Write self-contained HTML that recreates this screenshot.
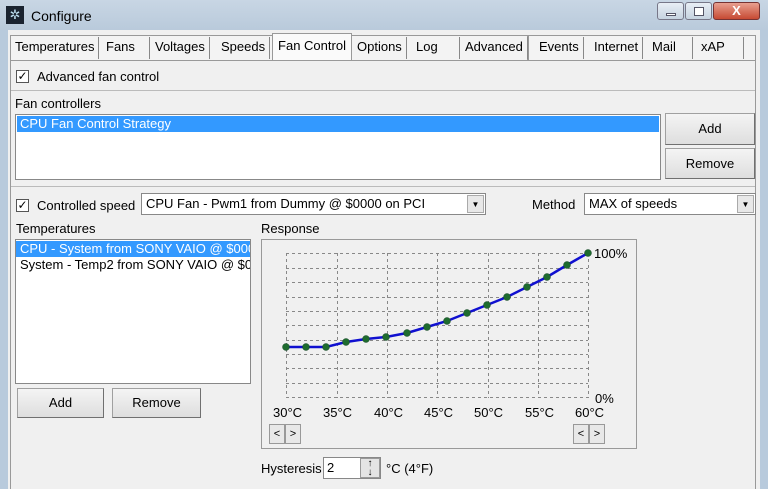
<!DOCTYPE html>
<html><head><style>
*{box-sizing:border-box;margin:0;padding:0}
body{width:768px;height:489px;overflow:hidden;background:#f0f0f0;font-family:"Liberation Sans",sans-serif;font-size:12.5px;color:#000;position:relative}
.a{position:absolute}
.btn{position:absolute;background:linear-gradient(#f4f4f4,#dedede);border:1px solid #a0a0a0;border-right-color:#707070;border-bottom-color:#707070;text-align:center;font-size:13px}
.cb{position:absolute;width:13px;height:13px;border:1px solid #555;background:#fff;font-size:12px;line-height:11px;text-align:center}
.tab{position:absolute;top:37px;height:22px;line-height:20px;font-size:13px;border-right:1px solid #888;padding:0 4px}
.combo{position:absolute;background:#fff;border:1px solid #888;height:22px;line-height:20px;padding-left:4px;font-size:13px}
.dd{position:absolute;right:1px;top:1px;width:17px;height:18px;background:#e8e8e8;border:1px solid #aaa;font-size:8px;text-align:center;line-height:17px}
.sb{position:absolute;width:16px;height:20px;background:#e8e8e8;border:1px solid #999;font-size:11px;text-align:center;line-height:18px}
</style></head><body>
<div class="a" style="left:0;top:0;width:768px;height:30px;background:linear-gradient(#c8d6e4,#b9cadb)"></div>
<div class="a" style="left:0;top:30px;width:8px;height:459px;background:#b8cadc"></div>
<div class="a" style="left:760px;top:30px;width:8px;height:459px;background:#b8cadc"></div>
<div class="a" style="left:6px;top:6px;width:18px;height:18px;background:#1a2330;color:#bde;font-size:13px;line-height:18px;text-align:center">✲</div>
<div class="a" style="left:31px;top:8px;font-size:14px">Configure</div>
<div class="a" style="left:657px;top:2px;width:27px;height:18px;border:1px solid #778;border-radius:3px;background:linear-gradient(#e8eef5,#c6d3e0)"><div class="a" style="left:8px;top:10px;width:10px;height:3px;background:#fff;border:1px solid #556"></div></div>
<div class="a" style="left:685px;top:2px;width:27px;height:18px;border:1px solid #778;border-radius:3px;background:linear-gradient(#e8eef5,#c6d3e0)"><div class="a" style="left:8px;top:4px;width:10px;height:9px;border:1px solid #556;background:#fff"></div></div>
<div class="a" style="left:713px;top:2px;width:47px;height:18px;border:1px solid #733;border-radius:3px;background:linear-gradient(#e8a090,#c74a33);color:#fff;font-weight:bold;text-align:center;line-height:16px;font-size:13px">X</div>
<div class="a" style="left:8px;top:30px;width:752px;height:459px;background:#f0f0f0"></div>
<div class="a" style="left:10px;top:35px;width:518px;height:26px;border:1px solid #999;border-bottom:none;background:#f3f3f3"></div>
<div class="a" style="left:528px;top:35px;width:228px;height:26px;border:1px solid #999;border-bottom:none;background:#f3f3f3"></div>
<div class="tab" style="left:11px">Temperatures</div>
<div class="tab" style="left:102px;width:48px">Fans</div>
<div class="tab" style="left:151px">Voltages</div>
<div class="tab" style="left:217px">Speeds</div>
<div class="a" style="left:272px;top:33px;width:80px;height:28px;background:#fafafa;border:1px solid #999;border-bottom:none;font-size:13px;text-align:center;line-height:24px">Fan Control</div>
<div class="tab" style="left:353px">Options</div>
<div class="tab" style="left:412px;width:48px">Log</div>
<div class="tab" style="left:461px">Advanced</div>
<div class="tab" style="left:535px">Events</div>
<div class="tab" style="left:590px">Internet</div>
<div class="tab" style="left:648px;width:45px">Mail</div>
<div class="tab" style="left:697px;width:47px">xAP</div>
<div class="a" style="left:10px;top:60px;width:746px;height:429px;border:1px solid #999;border-bottom:none;background:#f0f0f0"></div>
<div class="cb" style="left:16px;top:70px">✓</div>
<div class="a" style="left:37px;top:69px;font-size:13px">Advanced fan control</div>
<div class="a" style="left:11px;top:90px;width:744px;border-top:1px solid #bbb"></div>
<div class="a" style="left:15px;top:96px;font-size:13px">Fan controllers</div>
<div class="a" style="left:15px;top:114px;width:646px;height:66px;background:#fff;border:1px solid #888"></div>
<div class="a" style="left:17px;top:116px;width:642px;height:16px;background:#3399ff;color:#fff;padding-left:3px;line-height:16px;font-size:13px">CPU Fan Control Strategy</div>
<div class="btn" style="left:665px;top:113px;width:90px;height:32px;line-height:30px">Add</div>
<div class="btn" style="left:665px;top:148px;width:90px;height:31px;line-height:29px">Remove</div>
<div class="a" style="left:11px;top:186px;width:744px;border-top:1px solid #bbb"></div>
<div class="cb" style="left:16px;top:199px">✓</div>
<div class="a" style="left:37px;top:198px;font-size:13px">Controlled speed</div>
<div class="combo" style="left:141px;top:193px;width:345px">CPU Fan - Pwm1 from Dummy @ $0000 on PCI<div class="dd">▼</div></div>
<div class="a" style="left:532px;top:197px;font-size:13px">Method</div>
<div class="combo" style="left:584px;top:193px;width:172px">MAX of speeds<div class="dd">▼</div></div>
<div class="a" style="left:16px;top:221px;font-size:13px">Temperatures</div>
<div class="a" style="left:15px;top:239px;width:236px;height:145px;background:#fff;border:1px solid #888;overflow:hidden;white-space:nowrap">
<div style="background:#3399ff;color:#fff;padding-left:4px;height:16px;line-height:16px;margin-top:1px;font-size:13px">CPU - System from SONY VAIO @ $0000</div>
<div style="padding-left:4px;height:16px;line-height:16px;font-size:13px">System - Temp2 from SONY VAIO @ $0000</div></div>
<div class="btn" style="left:17px;top:388px;width:87px;height:30px;line-height:28px">Add</div>
<div class="btn" style="left:112px;top:388px;width:89px;height:30px;line-height:28px">Remove</div>
<div class="a" style="left:261px;top:221px;font-size:13px">Response</div>
<div class="a" style="left:261px;top:239px;width:376px;height:210px;border:1px solid #999"></div>
<svg class="a" style="left:0;top:0" width="768" height="489">
<g stroke="#888" stroke-dasharray="3,3" fill="none" stroke-width="1">
<line x1="286" y1="253.5" x2="588" y2="253.5"/><line x1="286" y1="268.5" x2="588" y2="268.5"/><line x1="286" y1="282.5" x2="588" y2="282.5"/><line x1="286" y1="297.5" x2="588" y2="297.5"/><line x1="286" y1="311.5" x2="588" y2="311.5"/><line x1="286" y1="325.5" x2="588" y2="325.5"/><line x1="286" y1="340.5" x2="588" y2="340.5"/><line x1="286" y1="354.5" x2="588" y2="354.5"/><line x1="286" y1="368.5" x2="588" y2="368.5"/><line x1="286" y1="383.5" x2="588" y2="383.5"/><line x1="286" y1="397.5" x2="588" y2="397.5"/>
<line x1="286.5" y1="253" x2="286.5" y2="398"/><line x1="337.5" y1="253" x2="337.5" y2="398"/><line x1="387.5" y1="253" x2="387.5" y2="398"/><line x1="437.5" y1="253" x2="437.5" y2="398"/><line x1="488.5" y1="253" x2="488.5" y2="398"/><line x1="538.5" y1="253" x2="538.5" y2="398"/><line x1="588.5" y1="253" x2="588.5" y2="398"/>
</g>
<polyline fill="none" stroke="#1010d0" stroke-width="2.5" points="286,347 306,347 326,347 346,342 366,339 386,337 407,333 427,327 447,321 467,313 487,305 507,297 527,287 547,277 567,265 588,253"/>
<g fill="#1e6b2e" stroke="#1a4a2a" stroke-width="0.5">
<circle cx="286" cy="347" r="3.5"/><circle cx="306" cy="347" r="3.5"/><circle cx="326" cy="347" r="3.5"/><circle cx="346" cy="342" r="3.5"/><circle cx="366" cy="339" r="3.5"/><circle cx="386" cy="337" r="3.5"/><circle cx="407" cy="333" r="3.5"/><circle cx="427" cy="327" r="3.5"/><circle cx="447" cy="321" r="3.5"/><circle cx="467" cy="313" r="3.5"/><circle cx="487" cy="305" r="3.5"/><circle cx="507" cy="297" r="3.5"/><circle cx="527" cy="287" r="3.5"/><circle cx="547" cy="277" r="3.5"/><circle cx="567" cy="265" r="3.5"/><circle cx="588" cy="253" r="3.5"/>
</g>
<g font-family="Liberation Sans" font-size="13" fill="#000">
<text x="594" y="258">100%</text><text x="595" y="403">0%</text>
<text x="273" y="417">30°C</text><text x="323" y="417">35°C</text><text x="374" y="417">40°C</text><text x="424" y="417">45°C</text><text x="474" y="417">50°C</text><text x="525" y="417">55°C</text><text x="575" y="417">60°C</text>
</g></svg>
<div class="sb" style="left:269px;top:424px">&lt;</div><div class="sb" style="left:285px;top:424px">&gt;</div>
<div class="sb" style="left:573px;top:424px">&lt;</div><div class="sb" style="left:589px;top:424px">&gt;</div>
<div class="a" style="left:261px;top:461px;font-size:13px">Hysteresis</div>
<div class="a" style="left:323px;top:457px;width:58px;height:22px;background:#fff;border:1px solid #888;padding-left:3px;line-height:20px;font-size:13px">2</div>
<div class="a" style="left:360px;top:458px;width:20px;height:20px;background:#e4e4e4;border:1px solid #999;font-size:10px;line-height:9px;text-align:center">↑<br>↓</div>
<div class="a" style="left:386px;top:461px;font-size:13px">°C (4°F)</div>
</body></html>
